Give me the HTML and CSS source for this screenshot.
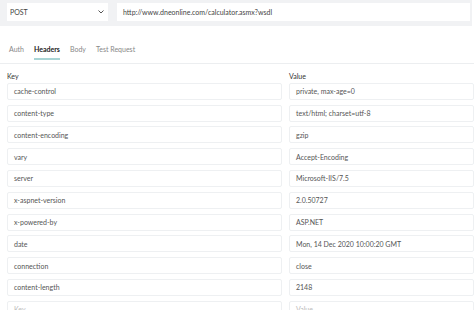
FILE: index.html
```html
<!DOCTYPE html>
<html lang="en">
<head>
    <meta charset="UTF-8">
    <meta name="viewport" content="width=device-width, initial-scale=1.0">
    <title>Request Headers</title>
    <link rel="stylesheet" href="styles.css">
</head>
<body>
    <div class="request-bar">
        <div class="method">
            <span>POST</span>
            <svg class="chevron" width="6" height="4" viewBox="0 0 6 4"><path d="M0.5 0.5 L3 3 L5.5 0.5" fill="none" stroke="#555" stroke-width="1"/></svg>
        </div>
        <div class="url">http://www.dneonline.com/calculator.asmx?wsdl</div>
    </div>

    <div class="tabs">
        <div class="tab">Auth</div>
        <div class="tab active">Headers</div>
        <div class="tab">Body</div>
        <div class="tab">Test Request</div>
    </div>

    <div class="headers">
        <div class="col-label">Key</div>
        <div class="col-label">Value</div>

        <div class="field">cache-control</div>
        <div class="field">private, max-age=0</div>
        <div class="field">content-type</div>
        <div class="field">text/html; charset=utf-8</div>
        <div class="field">content-encoding</div>
        <div class="field">gzip</div>
        <div class="field">vary</div>
        <div class="field">Accept-Encoding</div>
        <div class="field">server</div>
        <div class="field">Microsoft-IIS/7.5</div>
        <div class="field">x-aspnet-version</div>
        <div class="field">2.0.50727</div>
        <div class="field">x-powered-by</div>
        <div class="field">ASP.NET</div>
        <div class="field">date</div>
        <div class="field">Mon, 14 Dec 2020 10:00:20 GMT</div>
        <div class="field">connection</div>
        <div class="field">close</div>
        <div class="field">content-length</div>
        <div class="field">2148</div>
        <div class="field placeholder">Key</div>
        <div class="field placeholder">Value</div>
    </div>
</body>
</html>
```

FILE: styles.css
```css
body {
    margin: 0;
    width: 474px;
    font-family: Lato, "Open Sans", sans-serif;
    font-size: 7px;
    color: #555;
    background: white;
    overflow: hidden;
}
.request-bar {
    display: flex;
    gap: 9px;
    background: #f1f2f4;
    padding: 3px 2px 5px 7px;
    height: 18px;
    margin-right: 2px;
}
.method {
    width: 101px;
    background: white;
    display: flex;
    align-items: center;
    justify-content: space-between;
    padding: 0 4px 0 3px;
    box-sizing: border-box;
    color: #444;
}
.url {
    flex: 1;
    background: white;
    display: flex;
    align-items: center;
    padding: 0 6px;
    color: #444;
}
.tabs {
    display: flex;
    gap: 10px;
    padding: 18px 9px 0;
    border-bottom: 1px solid #eceef0;
}
.tab {
    color: #888;
    padding: 1px 0 5px;
    border-bottom: 2px solid transparent;
    margin-bottom: 3px;
}
.tab.active {
    color: #222;
    font-weight: bold;
    border-bottom-color: #a8d4d4;
}
.headers {
    display: grid;
    grid-template-columns: 275px 1fr;
    column-gap: 7px;
    row-gap: 4.8px;
    padding: 8px 0 0 7px;
}
.col-label {
    color: #333;
    margin-bottom: -2px;
}
.field {
    height: 17px;
    border: 1px solid #eef0f2;
    border-radius: 2px;
    display: flex;
    align-items: center;
    padding: 0 6px;
    box-sizing: border-box;
}
.placeholder { color: #bbb; }
```
